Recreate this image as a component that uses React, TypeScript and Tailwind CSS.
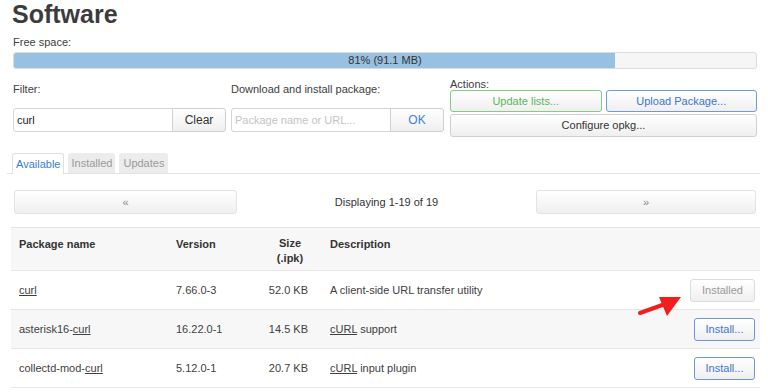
import React from "react";

interface Pkg {
    name: React.ReactNode;
    version: string;
    size: string;
    description: React.ReactNode;
    installed: boolean;
}

const u = (t: string) => <span className="underline">{t}</span>;

const packages: Pkg[] = [
    { name: u("curl"), version: "7.66.0-3", size: "52.0 KB", description: "A client-side URL transfer utility", installed: true },
    { name: <>asterisk16-{u("curl")}</>, version: "16.22.0-1", size: "14.5 KB", description: <>{u("cURL")} support</>, installed: false },
    { name: <>collectd-mod-{u("curl")}</>, version: "5.12.0-1", size: "20.7 KB", description: <>{u("cURL")} input plugin</>, installed: false },
];

const btn =
    "border rounded-[3px] bg-gradient-to-b from-white to-[#efefef] text-[11px] flex items-center justify-center";

export default function App() {
    return (
        <div
            className="relative w-[768px] h-[392px] overflow-hidden bg-white text-[#404040] text-[11px]"
            style={{ fontFamily: '"Liberation Sans", Arial, sans-serif' }}
        >
            <div className="pl-[13px] pr-[11px]">
                {/* Title */}
                <h1 className="text-[25px] font-bold leading-[29px] -ml-[1px] text-[#3c3c3c]">Software</h1>

                {/* Free space */}
                <div className="mt-[7px] leading-[13px]">Free space:</div>
                <div className="relative mt-[3px] h-[17px] rounded-[3px] border border-[#dcdcdc] bg-[#f6f6f6] overflow-hidden">
                    <div className="h-full w-[81%] bg-[#97c0e1]" />
                    <div className="absolute inset-0 flex items-center justify-center text-[11px] text-[#333]">81% (91.1 MB)</div>
                </div>

                {/* Controls */}
                <div className="flex items-start gap-[5px] mt-[9px]">
                    <div className="w-[213px]">
                        <div className="h-[30px] pt-[5px] leading-[13px]">Filter:</div>
                        <div className="flex h-[24px]">
                            <div className="flex-1 border border-[#d5d5d5] rounded-l-[3px] px-[3px] flex items-center text-[#222]">curl</div>
                            <div className={`${btn} w-[54px] -ml-px border-[#d0d0d0] rounded-l-none text-[#333] text-[12px]`}>Clear</div>
                        </div>
                    </div>
                    <div className="w-[213px]">
                        <div className="h-[30px] pt-[5px] leading-[13px]">Download and install package:</div>
                        <div className="flex h-[24px]">
                            <div className="flex-1 border border-[#d5d5d5] rounded-l-[3px] px-[3px] flex items-center text-[#c4c4c4]">Package name or URL...</div>
                            <div className={`${btn} w-[54px] -ml-px border-[#d0d0d0] rounded-l-none text-[#3f7fd6] text-[12px]`}>OK</div>
                        </div>
                    </div>
                    <div className="flex-1 ml-[1px]">
                        <div className="leading-[12px]">Actions:</div>
                        <div className="flex gap-[4px]">
                            <div className={`${btn} flex-1 h-[22px] border-[#7fcd7f] text-[#5cb35c]`}>Update lists...</div>
                            <div className={`${btn} flex-1 h-[22px] border-[#7299d6] text-[#3c74cf]`}>Upload Package...</div>
                        </div>
                        <div className={`${btn} mt-[2px] h-[23px] border-[#d0d0d0] text-[#333]`}>Configure opkg...</div>
                    </div>
                </div>
            </div>

            {/* Tabs */}
            <div className="mt-[16px] ml-[7px] mr-[8px] flex border-b border-[#e3e3e3] h-[21px] pl-[5px] gap-[4px]">
                <div className="px-[3px] h-[21px] border border-b-0 border-[#e0e0e0] rounded-t-[3px] bg-white text-[#3b7bd8] flex items-center -mb-px">Available</div>
                <div className="px-[3px] h-[20px] rounded-t-[3px] bg-[#ececec] text-[#9a9a9a] flex items-center">Installed</div>
                <div className="px-[4px] h-[20px] rounded-t-[3px] bg-[#ececec] text-[#9a9a9a] flex items-center">Updates</div>
            </div>

            {/* Pager */}
            <div className="mt-[16px] pl-[14px] pr-[12px] flex items-center h-[24px]">
                <div className={`${btn} w-[223px] h-full border-[#e3e3e3] text-[#888] text-[8px]`}>«</div>
                <div className="flex-1 text-center text-[11px] text-[#333]">Displaying 1-19 of 19</div>
                <div className={`${btn} w-[220px] h-full border-[#e3e3e3] text-[#888] text-[8px]`}>»</div>
            </div>

            {/* Table */}
            <div className="mt-[13px] ml-[11px] mr-[8px] border-t border-[#e3e3e3]">
                <div className="grid grid-cols-[157px_100px_54px_1fr_auto] bg-[#f7f7f7] h-[43px] font-bold text-[#333] border-b border-[#e6e6e6]">
                    <div className="pl-[8px] pt-[8px]">Package name</div>
                    <div className="pl-[8px] pt-[8px]">Version</div>
                    <div className="pt-[8px] text-center pr-[10px] leading-[15px]">Size<br />(.ipk)</div>
                    <div className="pl-[8px] pt-[8px]">Description</div>
                    <div />
                </div>
                {packages.map((p, i) => (
                    <div
                        key={i}
                        className={`grid grid-cols-[157px_100px_54px_1fr_auto] items-center h-[39px] border-b border-[#e6e6e6] ${i % 2 === 1 ? "bg-[#f7f7f7]" : "bg-white"}`}
                    >
                        <div className="pl-[8px]">{p.name}</div>
                        <div className="pl-[8px]">{p.version}</div>
                        <div className="text-right pr-[14px]">{p.size}</div>
                        <div className="pl-[8px]">{p.description}</div>
                        <div className="pr-[5px]">
                            {p.installed ? (
                                <div className={`${btn} w-[65px] h-[23px] border-[#dcdcdc] text-[#999]`}>Installed</div>
                            ) : (
                                <div className={`${btn} w-[61px] h-[23px] ml-[4px] border-[#6f97d6] text-[#3c74cf]`}>Install...</div>
                            )}
                        </div>
                    </div>
                ))}
            </div>

            {/* Annotation arrow */}
            <svg className="absolute left-0 top-0 pointer-events-none" width="768" height="392">
                <line x1="640" y1="313" x2="668" y2="303" stroke="#f01e1e" strokeWidth="4" strokeLinecap="round" />
                <polygon points="681,297 659,297 667,316" fill="#f01e1e" />
            </svg>
        </div>
    );
}
